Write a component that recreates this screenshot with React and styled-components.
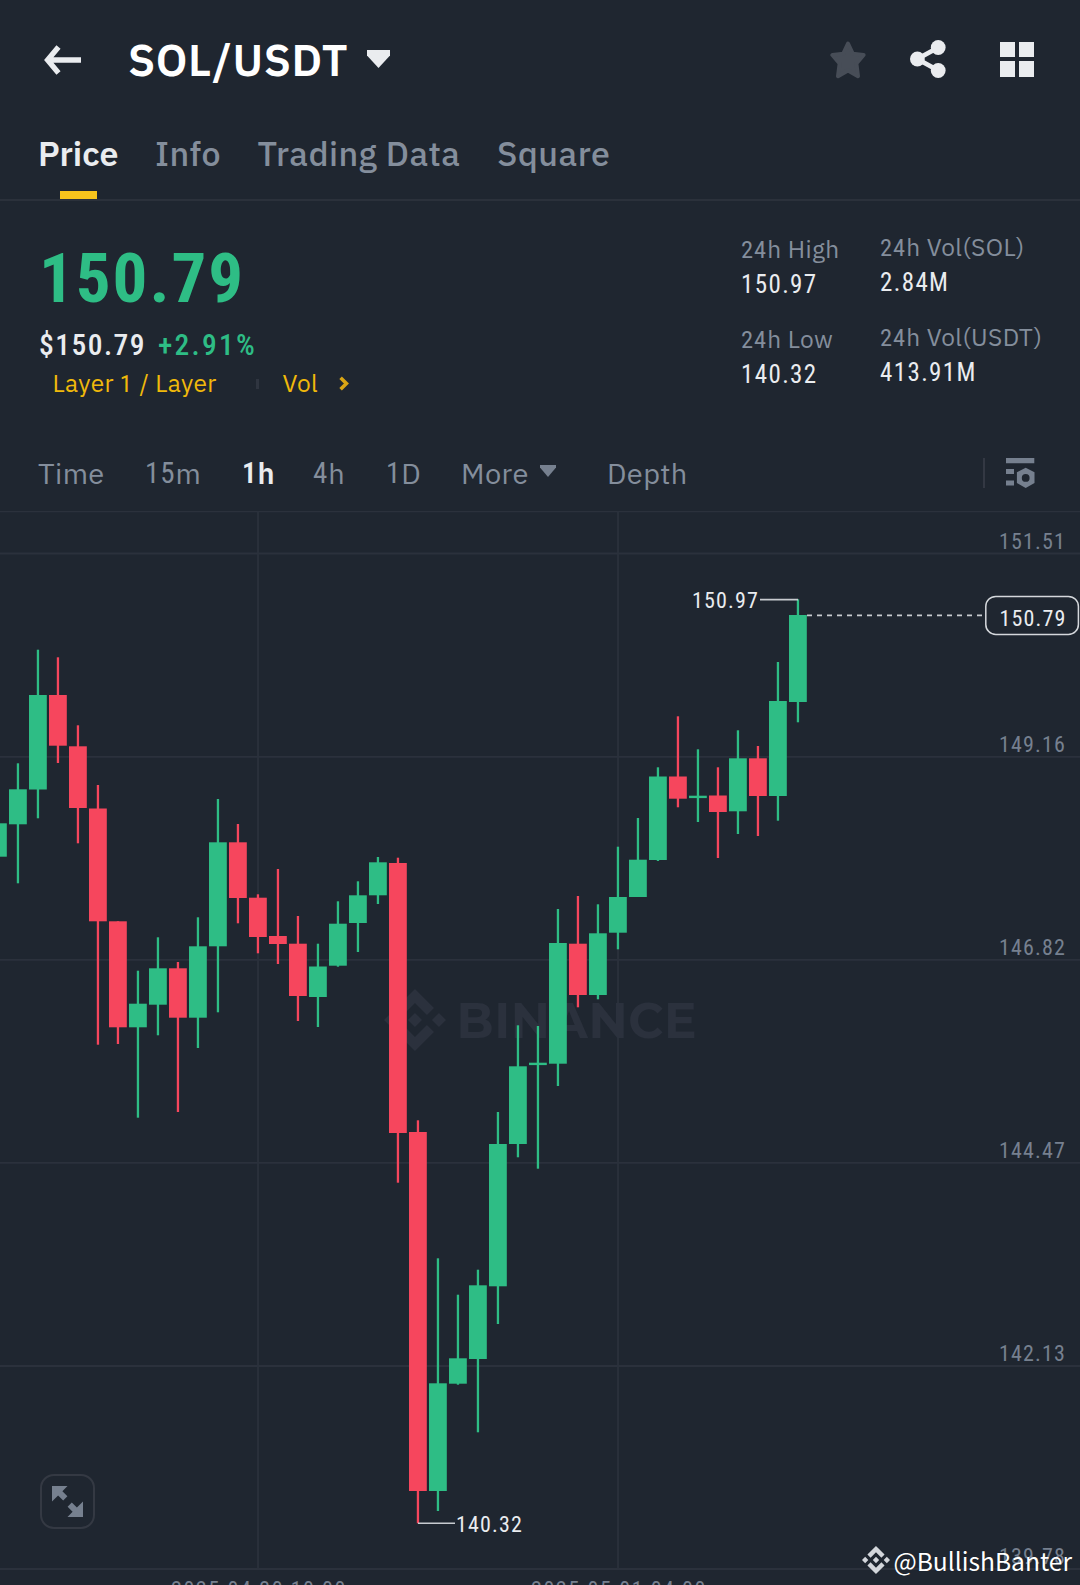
import styled, { createGlobalStyle } from "styled-components";
import { SiBinance } from "react-icons/si";

const tabs = ["Price", "Info", "Trading Data", "Square"];

// [direction, high, body top, body bottom, low] on the vertical scale of the chart
const candles = [
  ["up", 823.3, 823.3, 856.7, 856.7],
  ["up", 763.3, 789.3, 824.3, 883.3],
  ["up", 649.7, 695, 789.5, 818.3],
  ["down", 657.3, 695, 745.7, 763],
  ["down", 725.3, 746.3, 808, 843.3],
  ["down", 785, 808.5, 921.3, 1044.7],
  ["down", 921.3, 921.3, 1027.3, 1044],
  ["up", 970.7, 1003.7, 1027.3, 1117.7],
  ["up", 937.3, 968.3, 1004.7, 1035.3],
  ["down", 962, 968.3, 1017.7, 1112],
  ["up", 917.3, 946.3, 1017.7, 1048],
  ["up", 799, 842.3, 946.3, 1012.3],
  ["down", 824, 842.3, 898, 923.3],
  ["down", 894.3, 897.7, 937, 953.3],
  ["down", 869, 936, 944, 964],
  ["down", 916, 943.7, 996, 1021],
  ["up", 943.7, 966.5, 997, 1027],
  ["up", 901.3, 923.7, 965.7, 966.7],
  ["up", 881.3, 895.3, 923, 952],
  ["up", 857, 862.3, 895.3, 904],
  ["down", 857.7, 863, 1133, 1182.7],
  ["down", 1120.3, 1132, 1491, 1523.3],
  ["up", 1258.3, 1383.3, 1491, 1511],
  ["up", 1294.7, 1358.3, 1383.7, 1384.7],
  ["up", 1269.7, 1285.3, 1359, 1432.3],
  ["up", 1112, 1144, 1286.3, 1324],
  ["up", 1025.3, 1066.3, 1144, 1157.3],
  ["up", 1026, 1062.7, 1065.1, 1168.7],
  ["up", 909, 943, 1063.7, 1086],
  ["down", 896, 943.7, 995, 1007.3],
  ["up", 904.3, 933.3, 995, 999.3],
  ["up", 846.7, 897, 932.7, 949.3],
  ["up", 818, 859.7, 897, 897],
  ["up", 767.3, 776.5, 860, 861],
  ["down", 716.3, 776.5, 798.7, 807.3],
  ["up", 749.3, 795.7, 798.1, 822],
  ["down", 767.3, 795.5, 812, 858],
  ["up", 730.3, 758.3, 811.3, 834],
  ["down", 746, 758.3, 796, 836],
  ["up", 662, 701, 796, 820.7],
  ["up", 599.3, 615, 702, 722.3],
];

const priceLines = [
  { y: 553.5, label: "151.51" },
  { y: 756.8, label: "149.16" },
  { y: 959.9, label: "146.82" },
  { y: 1162.9, label: "144.47" },
  { y: 1366, label: "142.13" },
  { y: 1569, label: "139.78" },
];

const timeLines = [
  { x: 258, label: "2025-04-30 10:00" },
  { x: 618, label: "2025-05-01 04:00" },
];

function Header() {
  return (
    <HeaderBar>
      <BackIcon viewBox="0 0 37 30">
        <path d="M5 15h32M14.5 2 3.6 15l10.9 13" />
      </BackIcon>
      <Pair>SOL/USDT</Pair>
      <PairCaret viewBox="0 0 23 18">
        <path d="M0 0h23v5.4L11.5 18 0 5.4z" />
      </PairCaret>
      <StarIcon viewBox="0 0 38 38">
        <path d="M19 2.6l4.8 10.2L34.6 14l-7.2 8.4L29 35.2l-10-5.8-10 5.8 1.6-12.8L3.4 14l10.8-1.2z" />
      </StarIcon>
      <ShareIcon viewBox="0 0 36 38">
        <path d="M28.3 7.5 7.4 19l20.9 11.5" fill="none" strokeWidth="4.8" />
        <circle cx="28.2" cy="7.5" r="7.4" />
        <circle cx="7.4" cy="19" r="7.4" />
        <circle cx="28.2" cy="30.5" r="7.4" />
      </ShareIcon>
      <GridIcon>
        <i />
        <i />
        <i />
        <i />
      </GridIcon>
    </HeaderBar>
  );
}

function Stat({ label, value }) {
  return (
    <div>
      <StatLabel>
        <Num $s="0.04em">24</Num>
        {label}
      </StatLabel>
      <StatValue>{value}</StatValue>
    </div>
  );
}

function Summary() {
  return (
    <SummaryBox>
      <div>
        <LastPrice>150.79</LastPrice>
        <SubLine>
          <span>$150.79</span>
          <Change>+2.91%</Change>
        </SubLine>
        <TagLine>
          <span>
            Layer <Num>1</Num> / Layer
          </span>
          <TagDivider />
          <span>Vol</span>
          <TagChevron viewBox="0 0 10 15">
            <path d="M1.6 1.8 7.4 7.5l-5.8 5.7" />
          </TagChevron>
        </TagLine>
      </div>
      <Stats>
        <StatColumn $top={2}>
          <Stat label="h High" value="150.97" />
          <Stat label="h Low" value="140.32" />
        </StatColumn>
        <StatColumn>
          <Stat label="h Vol(SOL)" value="2.84M" />
          <Stat label="h Vol(USDT)" value="413.91M" />
        </StatColumn>
      </Stats>
    </SummaryBox>
  );
}

function Intervals() {
  return (
    <IntervalBar>
      <Interval $w={107}>Time</Interval>
      <Interval $w={97}>
        <Num $s="0.03em">15</Num>m
      </Interval>
      <Interval $w={71} $active>
        <Num $s="0.03em">1</Num>h
      </Interval>
      <Interval $w={73}>
        <Num $s="0.03em">4</Num>h
      </Interval>
      <Interval $w={75}>
        <Num $s="0.03em">1</Num>D
      </Interval>
      <Interval $w={146}>
        More
        <MoreCaret viewBox="0 0 16 12">
          <path d="M0 0h16v2.6L8 12 0 2.6z" />
        </MoreCaret>
      </Interval>
      <Interval $w={80}>Depth</Interval>
      <BarDivider />
      <SettingsIcon viewBox="0 0 29 30">
        <path d="M0 0h28.3v5.2H0zM0 11h8v5H0zM0 22.6h8v5H0z" />
        <path
          fillRule="evenodd"
          d="M19.7 9.7l8.8 4.6v10.8l-8.8 4.9-8.8-4.9V14.3zM19.7 16a3.9 3.9 0 1 0 0 7.8 3.9 3.9 0 0 0 0-7.8z"
        />
      </SettingsIcon>
    </IntervalBar>
  );
}

function Chart() {
  return (
    <ChartBox>
      <svg width="1080" height="1074" viewBox="0 511 1080 1074">
        <GridLine d="M0 511.4h1080" />
        {priceLines.map((line) => (
          <GridLine key={line.label} d={`M0 ${line.y}h1080`} />
        ))}
        {timeLines.map((line) => (
          <GridLine key={line.label} d={`M${line.x} 511V1569`} />
        ))}

        <Watermark>
          <SiBinance x="384" y="989" size="62" />
          <WatermarkText x="456.5" y="1037.6" textLength="240">
            BINANCE
          </WatermarkText>
        </Watermark>

        {candles.map(([dir, high, top, bottom, low], i) => (
          <Candle key={i} $dir={dir}>
            <rect x={i * 20 - 3.2} y={high} width="2.3" height={low - high} />
            <rect x={i * 20 - 11} y={top} width="17.8" height={bottom - top} />
          </Candle>
        ))}

        {priceLines.map((line) => (
          <AxisText key={line.label} x="999" y={line.y - 5}>
            {line.label}
          </AxisText>
        ))}
        {timeLines.map((line) => (
          <AxisText key={line.label} x={line.x - 87} y="1597" textLength="175.5">
            {line.label}
          </AxisText>
        ))}

        <Pointer d="M760 599.6h38" />
        <Mark x="692" y="608">
          150.97
        </Mark>
        <Pointer d="M418 1523.2h37" />
        <Mark x="456" y="1532">
          140.32
        </Mark>

        <Pointer d="M807 615.4h178" strokeDasharray="5 5" />
        <PriceTag x="985.8" y="596.4" width="92.6" height="38" rx="10" />
        <Mark x="999.5" y="626">
          150.79
        </Mark>
      </svg>

      <ExpandButton>
        <svg width="31" height="31" viewBox="0 0 31 31">
          <path d="M0 0h15.5L10.4 5.2l5 5-4.2 4.2-5.1-4.9L0 15.5zM31 31H15.5l5.1-5.2-5-5 4.2-4.2 5.1 4.9L31 15.5z" />
        </svg>
      </ExpandButton>
      <Author>
        <SiBinance size="28" />
        <span>@BullishBanter</span>
      </Author>
    </ChartBox>
  );
}

function App() {
  return (
    <Page>
      <GlobalStyle />
      <Header />
      <Tabs>
        {tabs.map((tab, i) => (
          <Tab key={tab} $active={i === 0}>
            {tab}
          </Tab>
        ))}
      </Tabs>
      <Summary />
      <Intervals />
      <Chart />
    </Page>
  );
}

export default App;

const plex = `"IBM Plex Sans", "Noto Sans", sans-serif`;
const digits = `"Roboto Condensed", Roboto, sans-serif`;

const GlobalStyle = createGlobalStyle`
  body {
    margin: 0;
    background: #1f2630;
  }
`;

const Page = styled.div`
  width: 1080px;
  height: 1585px;
  overflow: hidden;
  background: #1f2630;
  color: #eaecef;
  font-family: ${plex};
`;

const Num = styled.span`
  font-family: ${digits};
  letter-spacing: ${(p) => p.$s || "0.06em"};
`;

const HeaderBar = styled.header`
  display: flex;
  align-items: center;
  height: 120px;
  padding: 0 46px 2px 44px;
  box-sizing: border-box;

  svg {
    flex: none;
  }
`;

const BackIcon = styled.svg`
  width: 37px;
  height: 30px;
  margin-top: 2px;
  fill: none;
  stroke: #eaecef;
  stroke-width: 5.4;
`;

const Pair = styled.h1`
  width: 221px;
  margin: 0 18px 0 47px;
  color: #fff;
  font-size: 44.5px;
  font-weight: 600;
  line-height: 60px;
  letter-spacing: 0.6px;
  white-space: nowrap;
`;

const PairCaret = styled.svg`
  width: 23px;
  height: 18px;
  margin-right: auto;
  fill: #eaecef;
`;

const StarIcon = styled.svg`
  width: 38px;
  height: 38px;
  margin-top: 2px;
  fill: #474d57;
  stroke: #474d57;
  stroke-width: 4;
  stroke-linejoin: round;
`;

const ShareIcon = styled.svg`
  width: 36px;
  height: 38px;
  margin: 0 54px 0 43px;
  fill: #eaecef;
  stroke: #eaecef;
  stroke-width: 0;
`;

const GridIcon = styled.div`
  display: grid;
  grid-template-columns: 15px 15px;
  gap: 4px;

  i {
    height: 15.5px;
    background: #eaecef;
  }
`;

const Tabs = styled.nav`
  display: flex;
  gap: 36.5px;
  height: 81px;
  padding-left: 38px;
  box-sizing: border-box;
  border-bottom: 2px solid #2b313b;
`;

const Tab = styled.div`
  display: flex;
  flex-direction: column;
  align-items: center;
  justify-content: space-between;
  padding-top: 13px;
  color: ${(p) => (p.$active ? "#eaecef" : "#848e9c")};
  font-size: 34px;
  font-weight: ${(p) => (p.$active ? 600 : 500)};
  line-height: 40px;
  letter-spacing: ${(p) => (p.$active ? 0 : 0.45)}px;

  &::after {
    content: "";
    width: 37px;
    height: 8px;
    background: ${(p) => (p.$active ? "#f8c51c" : "transparent")};
  }
`;

const SummaryBox = styled.section`
  display: flex;
  justify-content: space-between;
  height: 235px;
  padding: 29px 0 0 39px;
  box-sizing: border-box;
`;

const LastPrice = styled.div`
  color: #2ebd85;
  font: 700 69px/97px ${digits};
  letter-spacing: 0.028em;
`;

const SubLine = styled.div`
  display: flex;
  gap: 12px;
  font: 500 29.5px/37px ${digits};
  letter-spacing: 0.05em;
`;

const Change = styled.span`
  color: #2ebd85;
  letter-spacing: 0.075em;
`;

const TagLine = styled.div`
  display: flex;
  align-items: center;
  padding-left: 13.5px;
  color: #f0b90b;
  font-size: 24.5px;
  line-height: 39px;
  letter-spacing: 0.3px;
`;

const TagDivider = styled.i`
  width: 3px;
  height: 10px;
  margin: 0 24px 0 39px;
  background: #2f3540;
`;

const TagChevron = styled.svg`
  width: 10px;
  height: 15px;
  margin-left: 21px;
  fill: none;
  stroke: #d9a514;
  stroke-width: 3.6;
`;

const Stats = styled.div`
  display: grid;
  grid-template-columns: 139px 200px;
`;

const StatColumn = styled.div`
  display: flex;
  flex-direction: column;
  gap: 20px;
  margin-top: ${(p) => p.$top || 0}px;
`;

const StatLabel = styled.div`
  color: #848e9c;
  font-size: 24.5px;
  line-height: 35px;
  letter-spacing: 0.4px;
  white-space: nowrap;
`;

const StatValue = styled.div`
  font: 400 25px/35px ${digits};
  letter-spacing: 0.055em;
`;

const IntervalBar = styled.nav`
  display: flex;
  align-items: center;
  height: 75px;
  padding: 0 0 1px 38px;
  box-sizing: border-box;
`;

const Interval = styled.div`
  display: flex;
  align-items: center;
  width: ${(p) => p.$w}px;
  color: ${(p) => (p.$active ? "#eaecef" : "#848e9c")};
  font-size: 29px;
  font-weight: ${(p) => (p.$active ? 600 : 400)};
  line-height: 40px;
  letter-spacing: 0.4px;
`;

const MoreCaret = styled.svg`
  width: 16px;
  height: 12px;
  margin: 0 0 4px 11px;
  fill: #76808f;
`;

const BarDivider = styled.i`
  width: 2px;
  height: 30px;
  margin: 0 21px 0 auto;
  background: #333843;
`;

const SettingsIcon = styled.svg`
  width: 29px;
  height: 30px;
  margin-right: 45px;
  fill: #76808f;
`;

const ChartBox = styled.main`
  position: relative;
  height: 1074px;

  > svg {
    display: block;
  }
`;

const GridLine = styled.path`
  stroke: #2b313c;
  stroke-width: 1.8;
`;

const Watermark = styled.g`
  color: #2b313d;
  fill: #2b313d;
`;

const WatermarkText = styled.text`
  font: 700 48.5px Montserrat, Lato, sans-serif;
`;

const Candle = styled.g`
  fill: ${(p) => (p.$dir === "up" ? "#2ebd85" : "#f6465d")};
`;

const AxisText = styled.text`
  fill: #76808f;
  font: 400 22px ${digits};
  letter-spacing: 0.052em;
`;

const Mark = styled(AxisText)`
  fill: #eaecef;
`;

const Pointer = styled.path`
  stroke: #c8cbd0;
  stroke-width: 1.6;
`;

const PriceTag = styled.rect`
  fill: #1f2630;
  stroke: #d5d8dc;
  stroke-width: 1.5;
`;

const ExpandButton = styled.button`
  position: absolute;
  left: 40px;
  bottom: 56px;
  display: flex;
  align-items: center;
  justify-content: center;
  width: 55px;
  height: 55px;
  padding: 0;
  border: 2px solid #343943;
  border-radius: 14px;
  background: none;

  svg {
    fill: #76808f;
  }
`;

const Author = styled.div`
  position: absolute;
  right: 8px;
  bottom: 6px;
  display: flex;
  align-items: center;
  gap: 3px;
  color: #d3d6db;

  span {
    color: #fff;
    font: 400 24.6px/38px "Noto Sans CJK SC", sans-serif;
    text-shadow: 0 0 1px #0006;
  }
`;
